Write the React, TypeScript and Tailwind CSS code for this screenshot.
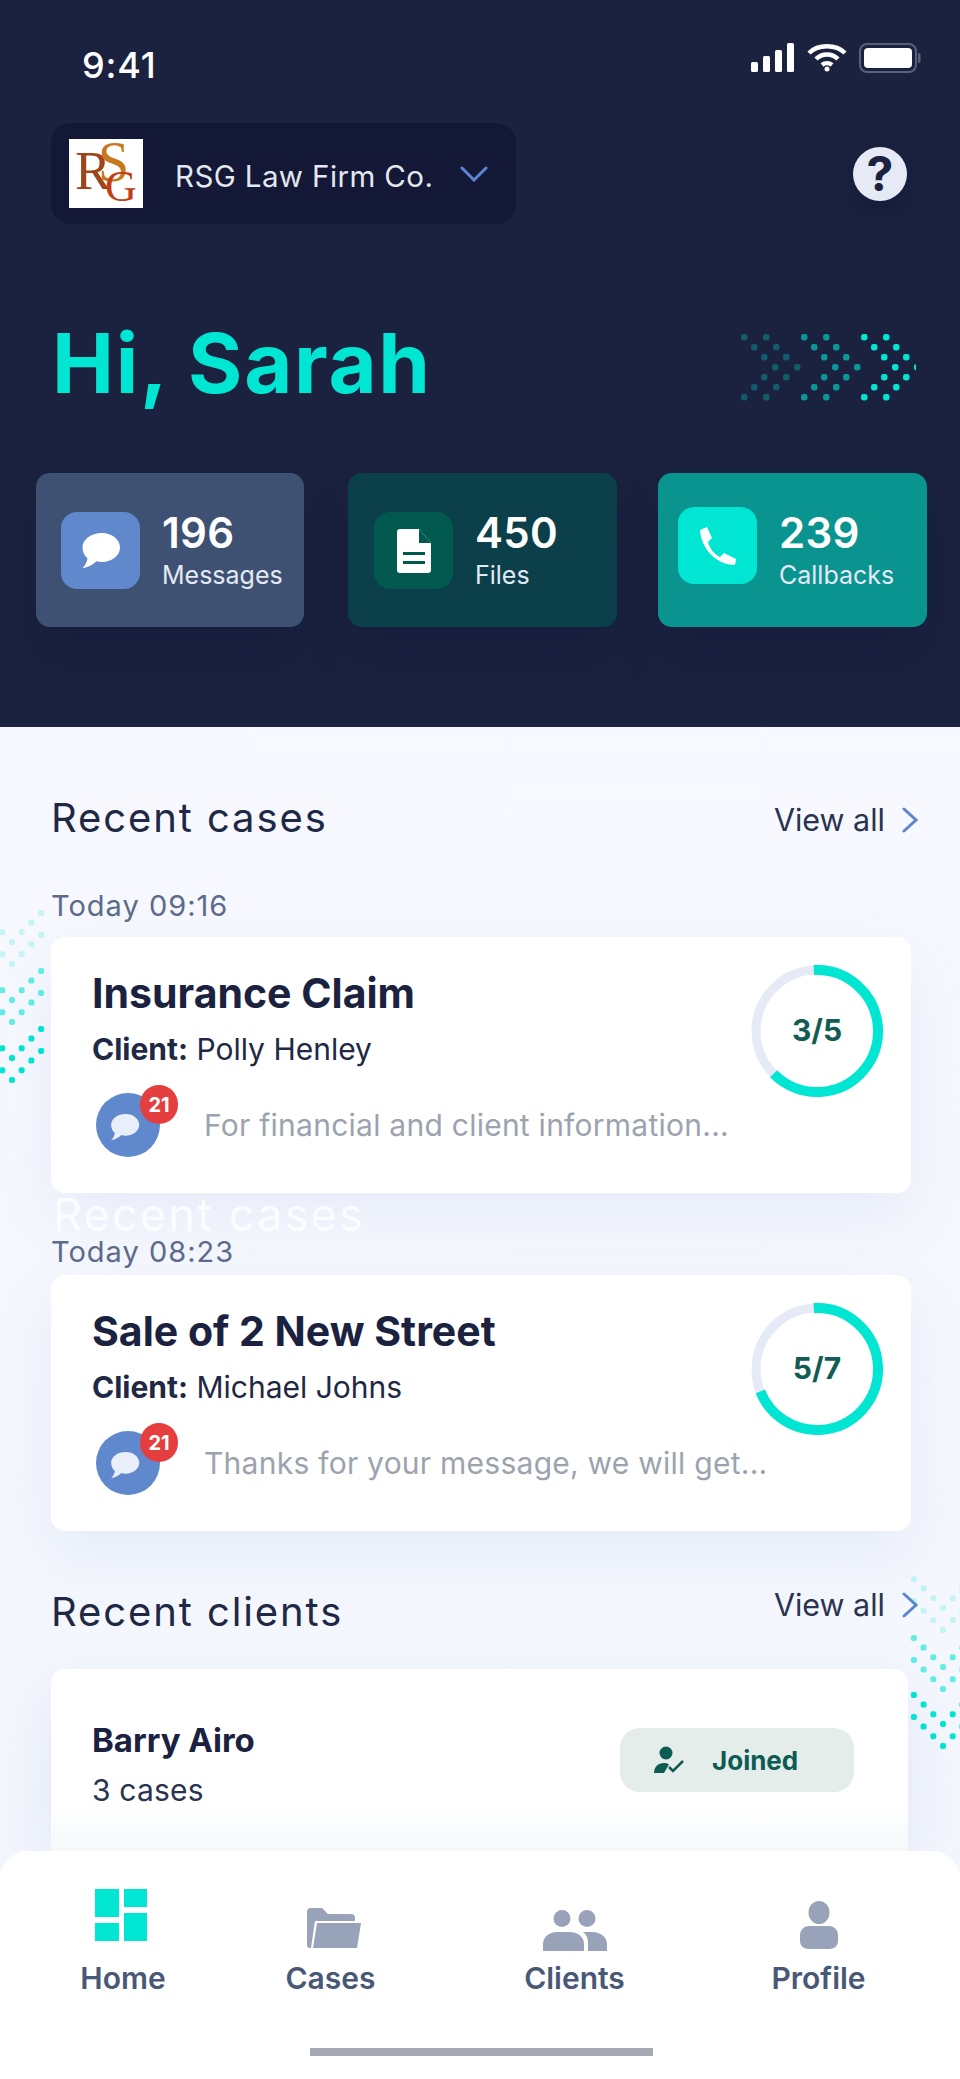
import React from "react";

const inter = "font-['Inter',sans-serif]";

function range(n: number) {
  return Array.from({ length: n }, (_, i) => i);
}

function HeaderDots() {
  const sets = [
    { x: 0, o: 0.3 },
    { x: 60, o: 0.6 },
    { x: 120, o: 1 },
  ];
  const off = [0, 10, 20, 31, 20, 10, 0];
  return (
    <svg width="176" height="68" viewBox="0 0 176 68" fill="#00e6d2">
      {sets.map((s) =>
        off.map((dx, i) =>
          [0, 22].map((p) => (
            <rect key={`${s.x}-${i}-${p}`} x={s.x + dx + p + 1} y={i * 10 + 1} width="6.5" height="6.5" rx="2.4" opacity={s.o} />
          ))
        )
      )}
    </svg>
  );
}

function SideDots({ tipX, tips, w, h }: { tipX: number; tips: number[]; w: number; h: number }) {
  const ops = [0.2, 0.6, 1];
  return (
    <svg width={w} height={h} viewBox={`0 0 ${w} ${h}`} fill="#00e6d2">
      {tips.map((t, s) =>
        [0, 22].map((p) =>
          range(7).map((i) => {
            const d = i - 3;
            return (
              <rect
                key={`${s}-${p}-${i}`}
                x={tipX + d * 9.7 - 3}
                y={t + p - Math.abs(d) * 9.7 - 3}
                width="6"
                height="6"
                rx="2.2"
                opacity={ops[s]}
              />
            );
          })
        )
      )}
    </svg>
  );
}

function Chevron() {
  return (
    <svg width="16" height="26" viewBox="0 0 16 26" fill="none" stroke="#5b87cf" strokeWidth="3" strokeLinecap="round">
      <path d="M2 2l12 11L2 24" />
    </svg>
  );
}

function Bubble({ w, h, fill }: { w: number; h: number; fill: string }) {
  return (
    <svg width={w} height={h} viewBox="0 0 40 37" fill={fill}>
      <path d="M21 1C31 1 39 7.500 39 15.500S31 30 21 30c-2 0-4-.2-5.800-.8C12 32.500 7 35.500 1.500 36c2.500-2.500 4.500-5.500 5-9.500C3.500 24 1.500 20 1.500 15.500 1.500 7.500 10 1 21 1z" />
    </svg>
  );
}

function Stat({
  cls,
  iconCls,
  icon,
  num,
  label,
}: {
  cls: string;
  iconCls: string;
  icon: React.ReactNode;
  num: string;
  label: string;
}) {
  return (
    <div className={`h-[154px] rounded-[14px] flex gap-[22px] pt-[34px] shadow-[0_30px_50px_rgba(8,12,40,0.12)] ${cls}`}>
      <div className={`w-[79px] h-[77px] rounded-[16px] flex items-center justify-center ${iconCls}`}>{icon}</div>
      <div className="mt-[4px] text-white">
        <div className="h-[44px] leading-[44px] text-[42px] font-semibold tracking-[0.3px]">{num}</div>
        <div className="mt-[2px] h-[36px] leading-[36px] text-[25px] text-[#e4e9f4]">{label}</div>
      </div>
    </div>
  );
}

function Ring({ label, deg }: { label: string; deg: number }) {
  const r = 61;
  const c = 2 * Math.PI * r;
  return (
    <div className="grid place-items-center w-[132px] h-[132px]">
      <svg className="col-start-1 row-start-1" width="132" height="132" viewBox="0 0 132 132" fill="none">
        <circle cx="66" cy="66" r={r} stroke="#e5eaf6" strokeWidth="9" />
        <circle
          cx="66"
          cy="66"
          r={r}
          stroke="#00e6d2"
          strokeWidth="10"
          strokeDasharray={`${(c * deg) / 360} ${c}`}
          transform="rotate(-93 66 66)"
        />
      </svg>
      <div className="col-start-1 row-start-1 pb-[2px] text-[30px] font-bold text-[#125c54]">{label}</div>
    </div>
  );
}

function CaseCard({ title, client, msg, ring, deg }: { title: string; client: string; msg: string; ring: string; deg: number }) {
  return (
    <div className="w-[860px] h-[256px] bg-white rounded-[14px] shadow-[0_24px_60px_rgba(110,135,200,0.10)] flex justify-between pl-[41px] pr-[28px]">
      <div className="pt-[32px] w-[650px] shrink-0">
        <div className="h-[48px] leading-[48px] text-[41px] font-bold text-[#1a2240] whitespace-nowrap">{title}</div>
        <div className="h-[40px] leading-[40px] mt-[12px] text-[30px] text-[#1f2844]">
          <span className="font-bold">Client:</span> {client}
        </div>
        <div className="mt-[24px] h-[64px] pl-[4px] flex items-center gap-[44px]">
          <div className="relative shrink-0 w-[64px] h-[64px] rounded-full bg-[#5f88cd] flex items-center justify-center">
            <span className="mt-[4px] mr-[6px]">
              <Bubble w={30} h={28} fill="#e9effa" />
            </span>
            <div className="absolute left-[44px] top-[-8px] w-[38px] h-[39px] rounded-full bg-[#e53e3e] flex items-center justify-center text-white text-[20px] font-bold">
              21
            </div>
          </div>
          <div className="text-[30px] tracking-[0.25px] text-[#9ca3af] whitespace-nowrap">{msg}</div>
        </div>
      </div>
      <div className="pt-[28px]">
        <Ring label={ring} deg={deg} />
      </div>
    </div>
  );
}

function ViewAll({ cls }: { cls: string }) {
  return (
    <div className={`flex items-center gap-[17px] ${cls}`}>
      <span className="text-[30.5px] text-[#2a3350]">View all</span>
      <Chevron />
    </div>
  );
}

const poppinsLike = "text-[40px] tracking-[1.9px] text-[#1f2844]";
const todayCls = "h-[40px] leading-[40px] text-[29px] tracking-[1px] text-[#5c6b8a]";

function NavItem({ label, icon, pb, cls }: { label: string; icon: React.ReactNode; pb: string; cls: string }) {
  return (
    <div className={`flex flex-col items-center ${cls}`}>
      <div className={`h-[62px] flex items-end ${pb}`}>{icon}</div>
      <div className="mt-[7px] h-[40px] leading-[40px] text-[30px] font-semibold text-[#4a5878]">{label}</div>
    </div>
  );
}

export default function App() {
  return (
    <div className={`w-[960px] h-[2079px] overflow-hidden flex flex-col bg-gradient-to-b from-[#f9faff] to-[#f3f6fd] ${inter}`}>
      <header className="h-[727px] shrink-0 bg-[#1a2240] pt-[43px]">
        <div className="flex justify-between pl-[82px] pr-[39px] h-[40px]">
          <div className="h-[40px] leading-[44px] text-[36px] font-medium tracking-[0.8px] text-white">9:41</div>
          <div className="flex gap-[12px]">
            <svg width="44" height="30" viewBox="0 0 44 30" fill="#fff">
              <rect x="0" y="19" width="7" height="10" rx="1.500" />
              <rect x="12" y="13" width="7" height="16" rx="1.500" />
              <rect x="24" y="7" width="7" height="22" rx="1.500" />
              <rect x="36" y="0" width="7" height="29" rx="1.500" />
            </svg>
            <svg width="40" height="30" viewBox="0 0 40 30" fill="none" stroke="#fff" strokeWidth="4.500">
              <path d="M2 10C11 1 29 1 38 10" />
              <path d="M9 16C15 10 25 10 31 16" />
              <path d="M15 22c3-2.500 7-2.500 10 0" />
              <circle cx="20" cy="26" r="2.500" fill="#fff" stroke="none" />
            </svg>
            <svg width="62" height="30" viewBox="0 0 62 30" fill="none">
              <rect x="1" y="1" width="56" height="28" rx="7" stroke="#5a6078" strokeWidth="2" />
              <rect x="5" y="5" width="48" height="20" rx="4" fill="#fff" />
              <rect x="59" y="10" width="2.500" height="10" rx="1" fill="#5a6078" />
            </svg>
          </div>
        </div>
        <div className="mt-[40px] flex justify-between items-center pl-[51px] pr-[53px]">
          <div className="w-[465px] h-[101px] rounded-[20px] bg-[#121835] flex items-center pl-[18px]">
            <svg width="74" height="69" viewBox="0 0 74 69" className="bg-white">
              <text x="6" y="50" fontFamily="Liberation Serif" fontSize="54" fill="#a0451a">R</text>
              <text x="29" y="42" fontFamily="Liberation Serif" fontSize="56" fill="#c8781e">S</text>
              <text x="36" y="62" fontFamily="Liberation Serif" fontSize="44" fill="#c43c14">G</text>
            </svg>
            <span className="ml-[32px] pt-[4px] text-[29.5px] leading-[40px] text-[#e4e7ee] tracking-[0.4px] whitespace-nowrap">RSG Law Firm Co.</span>
            <svg className="ml-[27px]" width="28" height="16" viewBox="0 0 28 16" fill="none" stroke="#5b87cf" strokeWidth="3" strokeLinecap="round">
              <path d="M2 2l12 12L26 2" />
            </svg>
          </div>
          <div className="w-[54px] h-[54px] rounded-full bg-[#e5eaf6] flex items-center justify-center text-[48px] leading-[54px] font-bold text-[#1a2240] shadow-[0_10px_20px_rgba(8,12,40,0.25)]">
            ?
          </div>
        </div>
        <div className="mt-[89px] h-[100px] flex justify-between items-center pl-[52px] pr-[44px]">
          <div className="text-[83px] leading-[100px] font-bold text-[#00e6d2] tracking-[1.7px]">Hi, Sarah</div>
          <div className="pt-[8px]">
            <HeaderDots />
          </div>
        </div>
        <div className="mt-[60px] pl-[36px] flex">
          <div className="w-[268px]">
            <Stat
              cls="bg-[#3e5173] pl-[25px]"
              iconCls="bg-[#5f88cd] mt-[5px]"
              icon={<Bubble w={40} h={37} fill="#fff" />}
              num="196"
              label="Messages"
            />
          </div>
          <div className="w-[269px] ml-[44px]">
            <Stat
              cls="bg-[#0b3f4a] pl-[26px]"
              iconCls="bg-[#02594f] mt-[5px]"
              icon={
                <svg width="34" height="44" viewBox="0 0 34 44">
                  <path fill="#fff" d="M3 0h19l12 14v27a3 3 0 0 1-3 3H3a3 3 0 0 1-3-3V3a3 3 0 0 1 3-3z" />
                  <path fill="#02594f" d="M22 0v14h12zM6 23h22v3H6zM6 32h22v3H6z" />
                </svg>
              }
              num="450"
              label="Files"
            />
          </div>
          <div className="w-[269px] ml-[41px]">
            <Stat
              cls="bg-[#0a9490] pl-[20px]"
              iconCls="bg-[#00e6d2]"
              icon={
                <svg width="38" height="38" viewBox="0 0 38 38" fill="#fff">
                  <path d="M1 3L8 0l5 11-4 4c2 7 6 12 12 15l4-4 12 6-1 6C18 38 2 22 1 3z" />
                </svg>
              }
              num="239"
              label="Callbacks"
            />
          </div>
        </div>
      </header>

      <main className="relative flex-1 min-h-0 pt-[63px] pl-[51px]">
        <div className="absolute left-0 top-[180px]">
          <SideDots tipX={12} tips={[35, 93, 151]} w={50} h={190} />
        </div>
        <div className="absolute right-0 top-[845px]">
          <SideDots tipX={43} tips={[36, 95, 152]} w={60} h={190} />
        </div>
        <div className="absolute left-[53px] top-[463px] z-20 text-[45px] leading-[50px] tracking-[2.2px] text-white opacity-80">Recent cases</div>

        <div className="relative z-10">
          <div className="h-[56px] flex justify-between items-center pr-[42px]">
            <h2 className={poppinsLike}>Recent cases</h2>
            <ViewAll cls="pt-[4px]" />
          </div>
          <div className={`mt-[40px] ${todayCls}`}>Today 09:16</div>
          <div className="mt-[11px]">
            <CaseCard title="Insurance Claim" client="Polly Henley" msg="For financial and client information..." ring="3/5" deg={228} />
          </div>
          <div className={`mt-[39px] ${todayCls}`}>Today 08:23</div>
          <div className="mt-[3px]">
            <CaseCard title="Sale of 2 New Street" client="Michael Johns" msg="Thanks for your message, we will get..." ring="5/7" deg={251} />
          </div>
          <div className="mt-[53px] h-[56px] flex justify-between items-center pr-[42px]">
            <h2 className={poppinsLike}>Recent clients</h2>
            <ViewAll cls="pb-[14px]" />
          </div>
          <div className="mt-[29px] w-[857px] h-[182px] rounded-t-[14px] bg-gradient-to-b from-white from-[75%] to-[#f6f8fa] shadow-[0_24px_60px_rgba(110,135,200,0.14)] flex justify-between pl-[41px] pr-[54px]">
            <div className="pt-[50px]">
              <div className="h-[42px] leading-[42px] text-[33px] font-bold text-[#1a2240]">Barry Airo</div>
              <div className="mt-[9px] h-[40px] leading-[40px] text-[30px] tracking-[0.2px] text-[#2a3350]">3 cases</div>
            </div>
            <div className="mt-[59px] w-[234px] h-[64px] rounded-[20px] bg-[#e5edea] flex items-center pl-[32px] gap-[27px]">
              <svg width="33" height="28" viewBox="0 0 33 28" fill="#0d5c54">
                <circle cx="14" cy="7" r="6.500" />
                <path d="M2 27c0-6 4-10 10-10 2 0 4 .5 5 1.500L12 27z" />
                <path d="M17 21l4 4 10-10" fill="none" stroke="#0d5c54" strokeWidth="2.500" />
              </svg>
              <span className="text-[26px] font-bold text-[#0d5c54]">Joined</span>
            </div>
          </div>
        </div>
      </main>

      <nav className="relative z-30 h-[228px] shrink-0 bg-white rounded-t-[28px] pt-[38px]">
        <div className="flex pl-[80px]">
          <NavItem
            label="Home"
            cls="w-[86px]"
            pb="pb-[10px] pr-[5px]"
            icon={
              <svg width="52" height="52" viewBox="0 0 52 52" fill="#00e6d2">
                <rect x="0" y="0" width="24" height="28" />
                <rect x="0" y="34" width="24" height="18" />
                <rect x="29" y="0" width="23" height="18" />
                <rect x="29" y="24" width="23" height="28" />
              </svg>
            }
          />
          <NavItem
            label="Cases"
            cls="w-[91px] ml-[119px]"
            pb="pb-[3px] pl-[7px]"
            icon={
              <svg width="54" height="41" viewBox="0 0 54 41" fill="#98a2b8">
                <path d="M0 5a4 4 0 0 1 4-4h11l6 6h23a4 4 0 0 1 4 4v3H8L4 41H3a3 3 0 0 1-3-3z" />
                <path d="M10 16h44l-4 25H6z" />
              </svg>
            }
          />
          <NavItem
            label="Clients"
            cls="w-[103px] ml-[147px]"
            pb="pb-0"
            icon={
              <svg width="64" height="41" viewBox="0 0 64 41" fill="#98a2b8">
                <circle cx="19" cy="8.500" r="8.500" />
                <circle cx="44" cy="8.500" r="8.500" />
                <path d="M0 41V34c0-7 6-12 14-12h13c8 0 14 5 14 12v7z" />
                <path d="M45 41V32c0-4-2-8-5-10h9c9 0 15 5 15 12v7z" />
              </svg>
            }
          />
          <NavItem
            label="Profile"
            cls="w-[95px] ml-[145px]"
            pb="pb-[2px]"
            icon={
              <svg width="38" height="48" viewBox="0 0 38 48" fill="#98a2b8">
                <ellipse cx="19" cy="11.500" rx="10.500" ry="11.500" />
                <path d="M9 25h20c5 0 9 4 9 9v6c0 5-4 8-9 8H9c-5 0-9-3-9-8v-6c0-5 4-9 9-9z" />
              </svg>
            }
          />
        </div>
        <div className="mt-[50px] ml-[310px] w-[343px] h-[8px] bg-[#a6a9b3]" />
      </nav>
    </div>
  );
}
